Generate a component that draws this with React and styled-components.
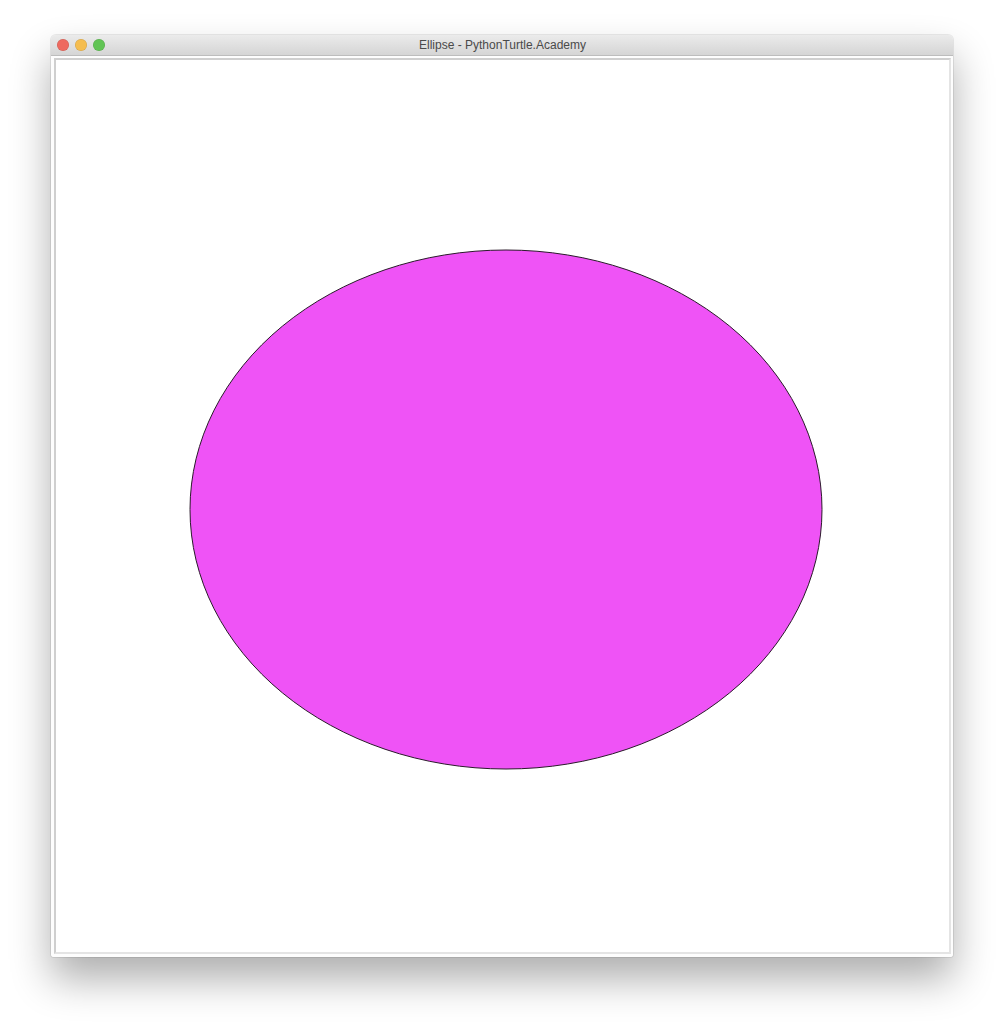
import React from 'react';
import styled, { createGlobalStyle } from 'styled-components';

const GlobalStyle = createGlobalStyle`
  html, body {
    margin: 0;
    padding: 0;
    background: #ffffff;
  }
  body {
    font-family: "Liberation Sans", Arial, sans-serif;
  }
`;

const Page = styled.div`
  width: 1004px;
  height: 1024px;
  padding: 35px 0 0 51px;
  box-sizing: border-box;
`;

const Window = styled.div`
  width: 902px;
  height: 922px;
  display: flex;
  flex-direction: column;
  border-radius: 5px 5px 3px 3px;
  background: #f6f6f6;
  box-shadow: 0 22px 40px rgba(0, 0, 0, 0.32), 0 0 0 1px rgba(0, 0, 0, 0.08);
  overflow: hidden;
`;

const TitleBar = styled.div`
  position: relative;
  height: 20px;
  flex-shrink: 0;
  display: flex;
  align-items: center;
  justify-content: center;
  background: linear-gradient(#ebebeb, #d5d5d5);
  border-bottom: 1px solid #bdbdbd;
`;

const Lights = styled.div`
  position: absolute;
  left: 6px;
  top: 4px;
  display: flex;
  gap: 6px;
`;

const Light = styled.span`
  width: 12px;
  height: 12px;
  border-radius: 50%;
  background: ${p => p.color};
  box-shadow: inset 0 0 0 0.5px rgba(0, 0, 0, 0.15);
`;

const Title = styled.div`
  font-size: 12px;
  color: #4a4a4a;
  margin-left: 1px;
`;

const Body = styled.div`
  flex: 1;
  padding: 2px 2px 3px 3px;
  background: #fdfdfd;
  display: flex;
`;

const Canvas = styled.div`
  flex: 1;
  border: 2px solid #cfcfcf;
  border-right-color: #e4e4e4;
  border-bottom-color: #e4e4e4;
  background: #ffffff;
  display: flex;
`;

const Drawing = styled.svg`
  width: 100%;
  height: 100%;
  display: block;
`;

export default function App() {
  // canvas inner area starts at page (56, 60)
  const cx = 506 - 56;
  const cy = 509.5 - 60;
  return (
    <>
      <GlobalStyle />
      <Page>
        <Window>
          <TitleBar>
            <Lights>
              <Light color="#ee6a5f" />
              <Light color="#f5bd4f" />
              <Light color="#61c454" />
            </Lights>
            <Title>Ellipse - PythonTurtle.Academy</Title>
          </TitleBar>
          <Body>
            <Canvas>
              <Drawing>
                <ellipse cx={cx} cy={cy} rx={316} ry={259.5} fill="#ef53f6" stroke="#2a1a2a" strokeWidth="1" />
              </Drawing>
            </Canvas>
          </Body>
        </Window>
      </Page>
    </>
  );
}
